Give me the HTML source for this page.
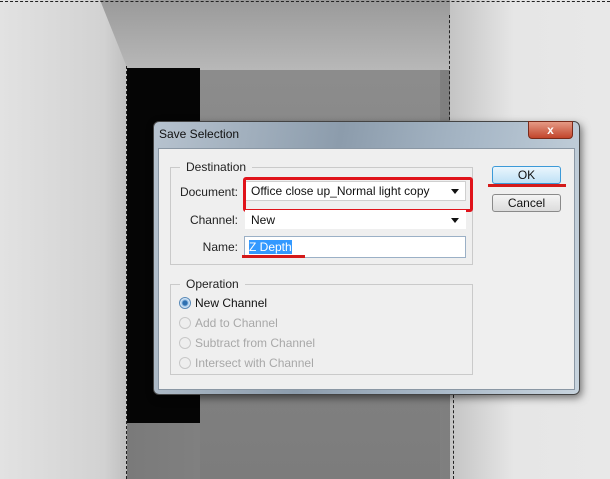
<!DOCTYPE html>
<html><head><style>
*{margin:0;padding:0;box-sizing:border-box}
body{width:610px;height:479px;overflow:hidden;position:relative;background:#dedede;font-family:"Liberation Sans",sans-serif;font-size:12px}
.a{position:absolute}
.lbl{position:absolute;color:#222;font-size:12px;text-align:right}
.dd{position:absolute;background:#fff;border:1px solid #cfcfcf;font-size:12px;padding:2px 5px;color:#111}
.arr{position:absolute;right:6px;top:7px;width:0;height:0;border-left:4px solid transparent;border-right:4px solid transparent;border-top:5px solid #111}
.rad{position:absolute;left:179px;width:12px;height:12px;border-radius:50%;border:1px solid #c8c8c8;background:#eee}
.rt{position:absolute;left:195px;font-size:12px;color:#a8a8a8}
.btn{position:absolute;left:492px;width:69px;height:18px;border:1px solid #8a8a8a;border-radius:3px;background:linear-gradient(#f4f4f4,#dcdcdc);text-align:center;font-size:12px;line-height:16px;color:#111}
</style></head><body>
<div class="a" style="left:0;top:0;width:130px;height:479px;background:linear-gradient(90deg,#e2e2e2,#d2d2d2 80%,#bdbdbd)"></div>
<div class="a" style="left:127px;top:40px;width:330px;height:439px;background:linear-gradient(90deg,#7a7a7a,#8a8a8a 60%,#7e7e7e)"></div>
<div class="a" style="left:100px;top:0;width:350px;height:70px;background:linear-gradient(#9a9a9a,#b8b8b8);clip-path:polygon(0 0,100% 0,100% 100%,8% 100%)"></div>
<div class="a" style="left:127px;top:68px;width:73px;height:355px;background:#050505"></div>
<div class="a" style="left:200px;top:70px;width:240px;height:409px;background:linear-gradient(#8c8c8c,#7c7c7c)"></div>
<div class="a" style="left:450px;top:0;width:160px;height:479px;background:linear-gradient(90deg,#c4c4c4,#e6e6e6 40%,#e8e8e8)"></div>
<div class="a" style="left:0;top:1px;width:610px;height:0;border-top:1px dashed #222"></div>
<div class="a" style="left:126px;top:66px;width:0;height:413px;border-left:1px dashed #222"></div>
<div class="a" style="left:449px;top:15px;width:0;height:110px;border-left:1px dashed #222"></div>
<div class="a" style="left:453px;top:395px;width:0;height:84px;border-left:1px dashed #222"></div>

<div class="a" style="left:153px;top:121px;width:427px;height:274px;border-radius:6px;background:linear-gradient(100deg,#b7c3cf,#8c9cac 40%,#a9b9c8 70%,#c8d4de);border:1px solid #444;box-shadow:2px 3px 8px rgba(0,0,0,.5)"></div>
<div class="a" style="left:159px;top:127px;font-size:12px;color:#111">Save Selection</div>
<div class="a" style="left:528px;top:121px;width:45px;height:18px;border-radius:0 0 4px 4px;background:linear-gradient(#e59a85,#c2452c);border:1px solid #7a2a1a;color:#fff;font-weight:bold;text-align:center;font-size:12px;line-height:16px">x</div>
<div class="a" style="left:158px;top:148px;width:417px;height:242px;background:#efefef;border:1px solid #8a97a4"></div>

<div class="a" style="left:170px;top:167px;width:303px;height:98px;border:1px solid #cacaca"></div>
<div class="a" style="left:180px;top:160px;background:#efefef;padding:0 6px;color:#222">Destination</div>
<div class="lbl" style="left:160px;top:185px;width:78px">Document:</div>
<div class="dd" style="left:245px;top:181px;width:221px;height:20px">Office close up_Normal light copy<span class="arr"></span></div>
<div class="a" style="left:243px;top:177px;width:230px;height:35px;border:3px solid #e0131b;border-radius:3px"></div>
<div class="lbl" style="left:160px;top:213px;width:78px">Channel:</div>
<div class="dd" style="left:245px;top:210px;width:221px;height:19px;border-color:#fff">New<span class="arr"></span></div>
<div class="lbl" style="left:160px;top:240px;width:78px">Name:</div>
<div class="dd" style="left:244px;top:236px;width:222px;height:22px;border-color:#9bb0c6;padding:3px 4px"><span style="background:#3399ff;color:#fff">Z Depth</span></div>
<div class="a" style="left:242px;top:255px;width:63px;height:3px;background:#d41a1a"></div>

<div class="a" style="left:170px;top:284px;width:303px;height:91px;border:1px solid #cacaca"></div>
<div class="a" style="left:180px;top:277px;background:#efefef;padding:0 6px;color:#222">Operation</div>
<div class="rad" style="top:297px;background:radial-gradient(circle,#2d6fb0 30%,#9cc4e8 45%,#eaf2fa 70%);border-color:#5a8ab8"></div>
<div class="rt" style="top:296px;color:#111">New Channel</div>
<div class="rad" style="top:317px"></div><div class="rt" style="top:316px">Add to Channel</div>
<div class="rad" style="top:337px"></div><div class="rt" style="top:336px">Subtract from Channel</div>
<div class="rad" style="top:357px"></div><div class="rt" style="top:356px">Intersect with Channel</div>

<div class="btn" style="top:166px;border-color:#3c9ad8;background:linear-gradient(#eaf6fd,#bfe1f6)">OK</div>
<div class="a" style="left:488px;top:184px;width:78px;height:3px;background:#d41a1a"></div>
<div class="btn" style="top:194px">Cancel</div>
</body></html>
